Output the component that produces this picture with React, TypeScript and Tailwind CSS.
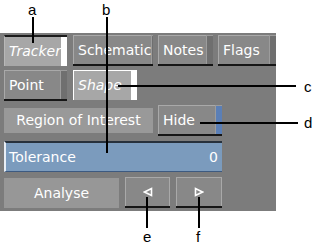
import React from "react"

const font = { fontFamily: '"DejaVu Sans", "Liberation Sans", sans-serif' }

function RaisedButton({
  label,
  className,
  italic,
  selected,
  strip = "bg-[#6f6f6f]",
}: {
  label?: React.ReactNode
  className: string
  italic?: boolean
  selected?: boolean
  strip?: string
}) {
  if (selected) {
    return (
      <div className={`flex h-[31px] ${className}`}>
        <div className="flex flex-1 items-center border-t-2 border-t-[#1c1c1c] border-l border-l-[#b8b8b8] bg-[#a7a7a7] pl-[4px] text-white italic">
          {label}
        </div>
        <div className="w-[6px] border-t-2 border-t-[#1c1c1c] bg-white" />
      </div>
    )
  }
  return (
    <div className={`flex h-[31px] border-b-2 border-b-[#161616] ${className}`}>
      <div
        className={`flex flex-1 items-center border-t border-l border-[#a9a9a9] bg-[#888888] pl-[4px] text-white ${
          italic ? "italic" : ""
        }`}
      >
        {label}
      </div>
      <div className={`w-[7px] border-t border-l border-[#9c9c9c] ${strip}`} />
    </div>
  )
}

function Arrow({ dir }: { dir: "left" | "right" }) {
  return (
    <svg width="10" height="10" viewBox="0 0 10 10">
      {dir === "left" ? (
        <polygon points="1.5,5 8.5,1.5 8.5,8.5" fill="none" stroke="white" strokeWidth="1.6" />
      ) : (
        <polygon points="8.5,5 1.5,1.5 1.5,8.5" fill="none" stroke="white" strokeWidth="1.6" />
      )}
    </svg>
  )
}

function ArrowButton({ dir, className }: { dir: "left" | "right"; className: string }) {
  return (
    <div className={`flex h-[31px] border-b-2 border-b-[#161616] ${className}`}>
      <div className="flex flex-1 items-center justify-center border-t border-l border-r border-[#a9a9a9] bg-[#888888]">
        <Arrow dir={dir} />
      </div>
    </div>
  )
}

export default function App() {
  return (
    <div className="relative h-[244px] w-[314px] overflow-hidden bg-white text-[14px]" style={font}>
      <div className="pt-[33px]">
        <div className="flex h-[178px] w-[276px] flex-col bg-[#7c7c7c] pt-[2px] pl-[4px]">
          {/* row 1 */}
          <div className="flex">
            <RaisedButton label="Tracker" selected className="w-[63px]" />
            <RaisedButton label="Schematic" className="ml-[6px] w-[80px]" />
            <RaisedButton label="Notes" className="ml-[5px] w-[55px]" />
            <RaisedButton label="Flags" className="ml-[5px] w-[58px]" />
          </div>

          {/* row 2 */}
          <div className="mt-[4px] flex">
            <RaisedButton label="Point" className="w-[63px]" />
            <div className="ml-[6px] flex h-[31px] w-[64px] pb-[1px]">
              <div className="flex flex-1 items-center border-t border-l border-white bg-[#a7a7a7] pl-[4px] text-white italic">
                Shape
              </div>
              <div className="w-[6px] border-t border-white bg-white" />
            </div>
          </div>

          {/* row 3 */}
          <div className="mt-[4px] flex">
            <div className="my-[3px] flex h-[25px] w-[149px] items-center justify-center bg-[#999999] text-white">
              Region of Interest
            </div>
            <RaisedButton label="Hide" className="ml-[5px] w-[64px]" strip="bg-[#5b7fb6]" />
          </div>

          {/* row 4 */}
          <div className="mt-[5px] flex h-[31px] w-[218px] items-center justify-between border-t-2 border-t-[#27313c] border-b border-b-[#3d5a80] border-l-2 border-l-[#e8eef5] bg-[#7b9bbd] pr-[4px] pl-[3px] text-white">
            <span>Tolerance</span>
            <span>0</span>
          </div>

          {/* row 5 */}
          <div className="mt-[5px] flex">
            <div className="mt-[1px] flex h-[30px] w-[115px] items-center justify-center bg-[#979797] text-white">
              Analyse
            </div>
            <ArrowButton dir="left" className="ml-[6px] w-[45px]" />
            <ArrowButton dir="right" className="ml-[6px] w-[46px]" />
          </div>
        </div>
      </div>

      {/* callouts */}
      <div
        className="pointer-events-none absolute inset-0 text-[15px] leading-none text-black"
        style={{ fontFamily: '"Liberation Sans", Arial, sans-serif' }}
      >
        <span className="absolute top-[2px] left-[28px]">a</span>
        <div className="absolute top-[17px] left-[32px] h-[26px] w-[2px] bg-black" />

        <span className="absolute top-[2px] left-[102px]">b</span>
        <div className="absolute top-[17px] left-[106px] h-[136px] w-[2px] bg-black" />

        <div className="absolute top-[85px] left-[118px] h-[2px] w-[178px] bg-black" />
        <span className="absolute top-[79px] left-[304px]">c</span>

        <div className="absolute top-[122px] left-[200px] h-[2px] w-[98px] bg-black" />
        <span className="absolute top-[115px] left-[304px]">d</span>

        <div className="absolute top-[197px] left-[146px] h-[31px] w-[2px] bg-black" />
        <span className="absolute top-[229px] left-[143px]">e</span>

        <div className="absolute top-[197px] left-[198px] h-[31px] w-[2px] bg-black" />
        <span className="absolute top-[229px] left-[196px]">f</span>
      </div>
    </div>
  )
}
